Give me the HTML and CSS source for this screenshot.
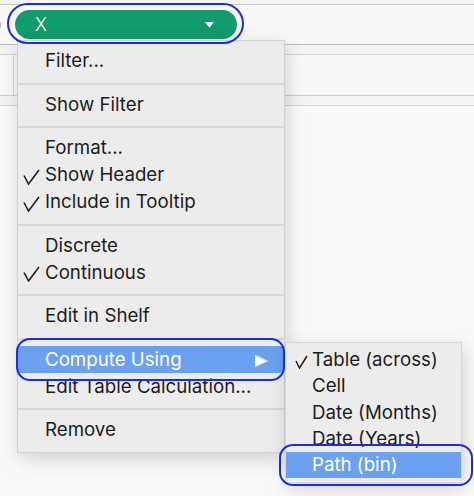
FILE: index.html
```html
<!DOCTYPE html>
<html>
<head>
<meta charset="utf-8">
<link rel="stylesheet" href="styles.css">
</head>
<body>
<div class="canvas">
  <div class="titlebar"></div>
  <div class="pillbar">
    <span class="back"></span>
    <div class="pill">
      <span class="pill-label">X</span>
      <svg class="caret" width="9" height="6" viewBox="0 0 9 6"><polygon points="0,0 9,0 4.5,5.5" fill="#fff"/></svg>
    </div>
  </div>
  <div class="shelf-gap"></div>
  <div class="shelf"><div class="shelf-cell"></div></div>
  <div class="shelf-gap"></div>
  <div class="sheet"></div>
</div>

<div class="menu">
  <div class="group">
    <div class="item"><span class="gutter"></span><span>Filter...</span></div>
  </div>
  <div class="group">
    <div class="item"><span class="gutter"></span><span>Show Filter</span></div>
  </div>
  <div class="group">
    <div class="item"><span class="gutter"></span><span>Format...</span></div>
    <div class="item"><span class="gutter"><svg class="check" width="17" height="16" viewBox="0 0 17 16"><path d="M1 6.5 L5.5 15 L16 1" fill="none" stroke="#222" stroke-width="1.6"/></svg></span><span>Show Header</span></div>
    <div class="item"><span class="gutter"><svg class="check" width="17" height="16" viewBox="0 0 17 16"><path d="M1 6.5 L5.5 15 L16 1" fill="none" stroke="#222" stroke-width="1.6"/></svg></span><span>Include in Tooltip</span></div>
  </div>
  <div class="group">
    <div class="item"><span class="gutter"></span><span>Discrete</span></div>
    <div class="item"><span class="gutter"><svg class="check" width="17" height="16" viewBox="0 0 17 16"><path d="M1 6.5 L5.5 15 L16 1" fill="none" stroke="#222" stroke-width="1.6"/></svg></span><span>Continuous</span></div>
  </div>
  <div class="group">
    <div class="item"><span class="gutter"></span><span>Edit in Shelf</span></div>
  </div>
  <div class="group">
    <div class="item active"><span class="gutter"></span><span class="grow">Compute Using</span><svg class="arrow" width="13" height="12" viewBox="0 0 13 12"><polygon points="0,0 13,6 0,12" fill="#fff"/></svg></div>
    <div class="item"><span class="gutter"></span><span>Edit Table Calculation...</span></div>
  </div>
  <div class="group">
    <div class="item"><span class="gutter"></span><span>Remove</span></div>
  </div>
</div>

<div class="submenu">
  <div class="item"><span class="gutter sub"><svg class="check" width="13" height="14" viewBox="0 0 13 14"><path d="M1 6 L4.5 13 L12 1" fill="none" stroke="#222" stroke-width="1.5"/></svg></span><span>Table (across)</span></div>
  <div class="item"><span class="gutter sub"></span><span>Cell</span></div>
  <div class="item"><span class="gutter sub"></span><span>Date (Months)</span></div>
  <div class="item"><span class="gutter sub"></span><span>Date (Years)</span></div>
  <div class="item active"><span class="gutter sub"></span><span>Path (bin)</span></div>
</div>

<div class="callout callout-pill"></div>
<div class="callout callout-compute"></div>
<div class="callout callout-path"></div>
</body>
</html>
```

FILE: styles.css
```css
html, body {
  margin: 0;
  padding: 0;
}
body {
  width: 474px;
  height: 496px;
  overflow: hidden;
  background: #f9f9f9;
  font-family: Inter, "Liberation Sans", Arial, sans-serif;
  color: #1c1c1c;
  position: relative;
}
.canvas {
  display: flex;
  flex-direction: column;
}
.titlebar {
  height: 4px;
  background: #f4f4f4;
  border-bottom: 1px solid #c9c9c9;
}
.pillbar {
  height: 39px;
  background: #f7f7f7;
  display: flex;
  align-items: flex-start;
  padding-left: 15px;
  position: relative;
}
.back {
  position: absolute;
  left: 0;
  top: 17px;
  width: 3px;
  height: 6px;
  border-left: 1px solid #b8b8b8;
}
.pill {
  margin-top: 5px;
  width: 222px;
  height: 29px;
  border-radius: 15px;
  background: #129b6b;
  display: flex;
  align-items: center;
  justify-content: space-between;
  padding: 0 23px 0 20px;
  box-sizing: border-box;
}
.pill-label {
  color: #fff;
  font-size: 18px;
  font-weight: 300;
  line-height: 1;
}
.caret {
  display: block;
  margin-top: 1px;
}
.shelf-gap {
  height: 9px;
  background: #f3f3f3;
  border-top: 1px solid #bdbdbd;
  border-bottom: 1px solid #d4d4d4;
}
.shelf {
  height: 40px;
  background: #f8f8f8;
  display: flex;
}
.shelf-cell {
  width: 13px;
  border-right: 1px solid #d4d4d4;
}
.shelf + .shelf-gap {
  border-top: 1px solid #cdcdcd;
}
.sheet {
  flex: 1;
  height: 390px;
  background: #fafafa;
}

.menu {
  position: absolute;
  left: 17px;
  top: 40px;
  width: 268px;
  box-sizing: border-box;
  background: #ececec;
  border: 1px solid #d2d2d2;
  box-shadow: 2px 6px 18px rgba(0, 0, 0, 0.16);
}
.group {
  padding: 6px 0 8.5px;
  border-bottom: 2px solid #d7d7d7;
}
.group:last-child {
  border-bottom: none;
}
.item {
  height: 27px;
  display: flex;
  align-items: center;
  font-size: 18.7px;
  line-height: 27px;
  white-space: nowrap;
}
.item.active {
  background: #6ba1ef;
  color: #fff;
}
.gutter {
  width: 27px;
  flex: none;
  display: flex;
  justify-content: flex-end;
  padding-right: 5px;
  box-sizing: border-box;
}
.grow {
  flex: 1;
}
.arrow {
  display: block;
  margin-right: 16px;
  margin-top: 3px;
}
.check {
  display: block;
  margin-top: 4px;
}

.submenu {
  position: absolute;
  left: 285px;
  top: 342px;
  width: 177px;
  padding: 3.5px 0 4px;
  box-sizing: border-box;
  background: #ececec;
  border: 1px solid #d6d6d6;
  box-shadow: 2px 6px 18px rgba(0, 0, 0, 0.16);
}
.submenu .item {
  height: 26.3px;
}
.gutter.sub {
  width: 26px;
  padding-right: 4px;
}

.callout {
  position: absolute;
  border: 2.5px solid #1b2fd6;
  box-sizing: border-box;
}
.callout-pill {
  left: 7px;
  top: 3px;
  width: 237px;
  height: 41px;
  border-radius: 21px;
}
.callout-compute {
  left: 16px;
  top: 338px;
  width: 269px;
  height: 43px;
  border-radius: 14px;
}
.callout-path {
  left: 279px;
  top: 444px;
  width: 194px;
  height: 42px;
  border-radius: 14px;
}
```
